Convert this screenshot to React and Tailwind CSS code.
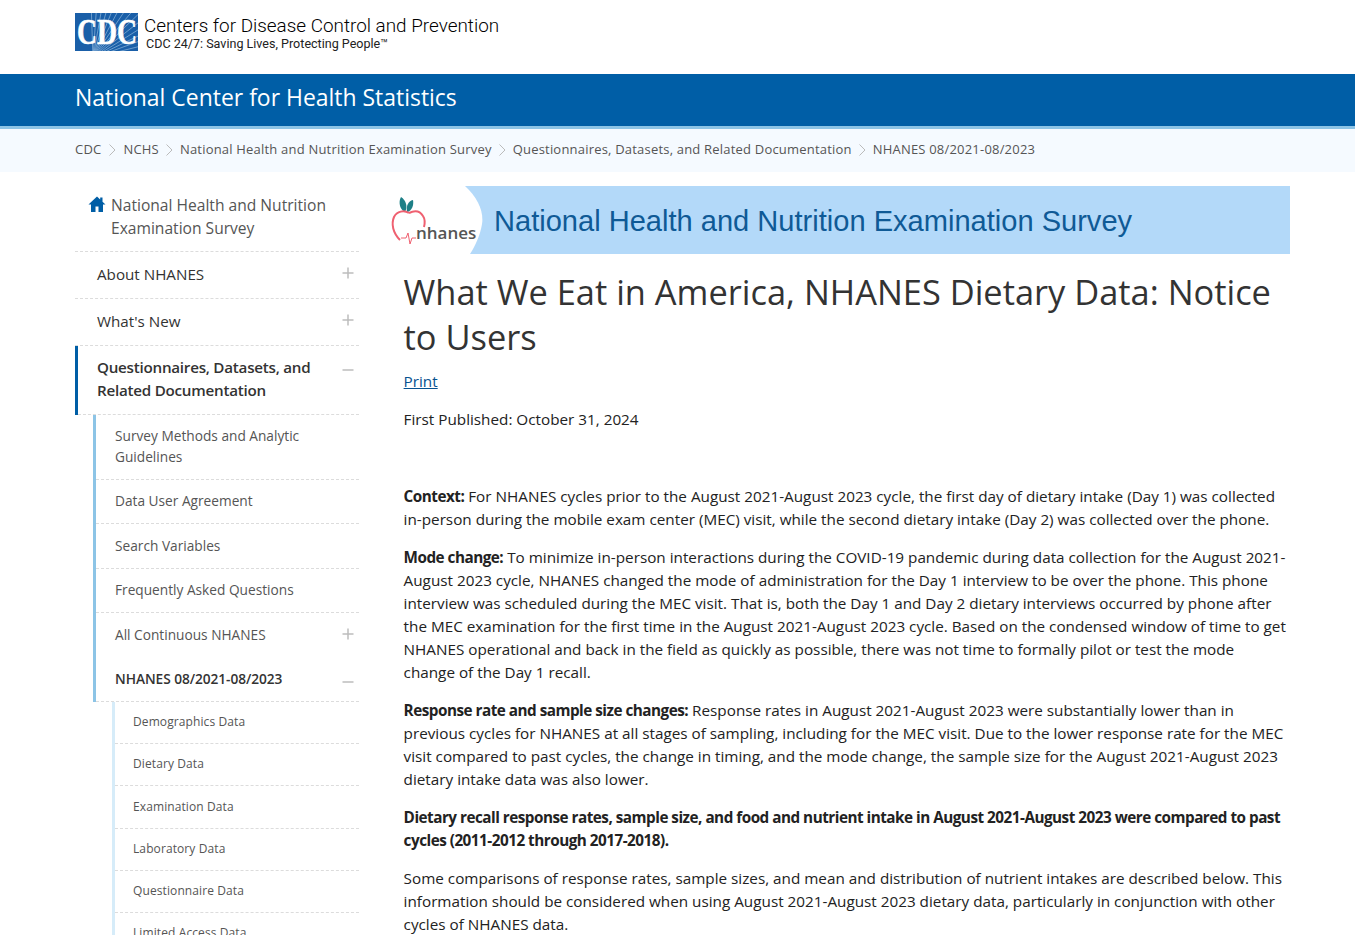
function CdcLogo() {
  const rays = [];
  for (let i = 0; i < 15; i++) {
    const a = (-8 - i * 6) * Math.PI / 180;
    rays.push(<line key={i} x1="18" y1="45" x2={18 + 90 * Math.cos(a)} y2={45 + 90 * Math.sin(a)} stroke="#8fb8dc" strokeWidth="0.7" />);
  }
  return (
    <div className="relative w-[63px] h-[38px] bg-[#1a5fa8] overflow-hidden shrink-0">
      <svg className="absolute inset-0" width="63" height="38" viewBox="0 0 63 38">{rays}</svg>
      <span className="absolute left-[1.5px] top-0 text-[36px] leading-[38px] font-bold text-white [-webkit-text-stroke:0.6px_white] [font-family:'Liberation_Serif',serif] [transform:scaleX(0.77)] origin-left">CDC</span>
    </div>
  );
}

function Nhanes() {
  return (
    <div className="relative w-[95px] h-[68px] shrink-0">
      <svg className="absolute inset-0" width="95" height="68" viewBox="0 0 95 68">
        <path d="M0 0H77C90 12 96 26 94 38C92 50 87 60 82 68H0Z" fill="#fff" />
        <path d="M17 26C12 24 10 16 13 11C18 14 20 21 17 26Z" fill="#1d7f86" />
        <path d="M19 26C18 20 20 15 25 14C26 19 24 25 19 26Z" fill="#1d7f86" />
        <path d="M21 27C16 24 9 25 6 31C3 38 5 47 12 54" fill="none" stroke="#ef6070" strokeWidth="2" />
        <path d="M21 27C27 24 32 25 35 30C37 33 37 37 36 41" fill="none" stroke="#ef6070" strokeWidth="2" />
        <path d="M13 52H18L20 47L22 58L24 52H28" fill="none" stroke="#ef6070" strokeWidth="1" />
      </svg>
      <span className="absolute left-[28px] top-[35px] text-[17px] leading-[24px] font-semibold text-[#555] [font-family:'Open_Sans',sans-serif]">nhanes</span>
    </div>
  );
}

function Plus() {
  return (
    <svg className="shrink-0" width="12" height="12" viewBox="0 0 12 12">
      <path d="M6 0.5V11.5M0.5 6H11.5" stroke="#bdbdbd" strokeWidth="1.5" fill="none" />
    </svg>
  );
}
function Minus() {
  return (
    <svg className="shrink-0" width="12" height="12" viewBox="0 0 12 12">
      <path d="M0.5 6H11.5" stroke="#bdbdbd" strokeWidth="1.5" fill="none" />
    </svg>
  );
}

const crumbs = ["CDC", "NCHS", "National Health and Nutrition Examination Survey", "Questionnaires, Datasets, and Related Documentation", "NHANES 08/2021-08/2023"];

function Crumb() {
  return (
    <div className="h-[43px] pb-[1px] bg-[#f5faff] pl-[75px] flex items-center text-[13px] tracking-[0.2px] text-[#555]">
      {crumbs.map((c, i) => (
        <div key={c} className="flex items-center first:mr-[1px]">
          {i > 0 && (
            <svg className="mx-[6px]" width="9" height="14" viewBox="0 0 9 14">
              <path d="M1.5 1.5L7 7L1.5 12.5" stroke="#bbb" strokeWidth="1" fill="none" />
            </svg>
          )}
          <span>{c}</span>
        </div>
      ))}
    </div>
  );
}

function L1({ label, icon }) {
  return (
    <div className="h-[47px] pl-[22px] pr-[5.5px] border-b border-dashed border-[#dcdcdc] flex items-center justify-between text-[15.2px] text-[#333]">
      <span className="mt-[-1px]">{label}</span>
      <span className="mt-[-5px]">{icon}</span>
    </div>
  );
}

function L2({ label, border = true, icon, bold }) {
  return (
    <div className={`h-[44.4px] pl-[19px] pr-[5.5px] flex items-center justify-between text-[13.7px] ${bold ? "font-semibold tracking-[-0.05px] text-[#333]" : "text-[#555]"} ${border ? "border-b border-dashed border-[#dcdcdc]" : ""}`}>
      <span>{label}</span>
      {icon}
    </div>
  );
}

function L3({ label }) {
  return (
    <div className="h-[42.25px] pl-[18px] pb-[1px] flex items-center border-b border-dashed border-[#dcdcdc] text-[12px] tracking-[0.1px] text-[#555]">
      {label}
    </div>
  );
}

function Sidebar() {
  return (
    <aside className="w-[284px] shrink-0 mt-[8px]">
      <div className="pl-[13px] pr-2 pb-[11px] flex text-[15.6px] leading-[23px] text-[#555] border-b border-dashed border-[#dcdcdc]">
        <svg className="mt-[2px] mr-[5px] shrink-0" width="18" height="16" viewBox="0 0 18 16">
          <path d="M9 0.5L0.5 8.5H3V16H7.5V10.5H10.5V16H15V8.5H17.5L14.5 5.7V1.5H12.2V3.5Z" fill="#005ea6" />
        </svg>
        <span>National Health and Nutrition<br />Examination Survey</span>
      </div>
      <L1 label="About NHANES" icon={<Plus />} />
      <L1 label="What's New" icon={<Plus />} />
      <div className="border-l-[3px] border-[#005ea6] h-[69px] pl-[19px] pr-[5.5px] pb-[4px] relative flex items-center justify-between text-[15.2px] leading-[23px] font-semibold tracking-[-0.25px] text-[#333]">
        <span>Questionnaires, Datasets, and<br />Related Documentation</span>
        <span className="mt-[-17px]"><Minus /></span>
        <div className="absolute bottom-0 left-0 right-0 border-b border-dashed border-[#dcdcdc]" />
      </div>
      <div className="ml-[18px] border-l-[3px] border-[#8cc4e6]">
        <div className="h-[65px] pl-[19px] pb-[2px] flex items-center text-[13.7px] leading-[21px] text-[#555] border-b border-dashed border-[#dcdcdc]">
          <span>Survey Methods and Analytic<br />Guidelines</span>
        </div>
        <L2 label="Data User Agreement" />
        <L2 label="Search Variables" />
        <L2 label="Frequently Asked Questions" />
        <L2 label="All Continuous NHANES" border={false} icon={<span className="mb-[2px]"><Plus /></span>} />
        <L2 label="NHANES 08/2021-08/2023" bold icon={<span className="mt-[6px]"><Minus /></span>} />
      </div>
      <div className="ml-[37px] border-l-[3px] border-[#d6ecf9]">
        <L3 label="Demographics Data" />
        <L3 label="Dietary Data" />
        <L3 label="Examination Data" />
        <L3 label="Laboratory Data" />
        <L3 label="Questionnaire Data" />
        <L3 label="Limited Access Data" />
      </div>
    </aside>
  );
}

export default function App() {
  return (
    <div className="h-[935px] overflow-hidden bg-white [font-family:'Open_Sans',sans-serif]">
      <header className="h-[74px] pl-[75px] pt-[13px] flex">
        <CdcLogo />
        <div className="ml-[6px] [font-family:'Roboto',sans-serif] text-black">
          <div className="text-[18.9px] leading-[26px] font-light">Centers for Disease Control and Prevention</div>
          <div className="text-[12.55px] leading-[12px] ml-[2px] mt-[-1px] text-[#222]">CDC 24/7: Saving Lives, Protecting People™</div>
        </div>
      </header>
      <div className="h-[55px] bg-[#005ea6] border-b-[3px] border-[#8cc4e6] pl-[75px] pb-[5px] flex items-center text-[22.95px] text-white">
        National Center for Health Statistics
      </div>
      <Crumb />
      <div className="flex pl-[75px] pt-[14px]">
        <Sidebar />
        <main className="ml-[29px] w-[902px]">
          <div className="h-[68px] bg-[#b3d9f9] flex items-center">
            <Nhanes />
            <span className="ml-[11px] mt-[4px] [font-family:'Liberation_Sans',sans-serif] text-[29.07px] text-[#0f5a96]">National Health and Nutrition Examination Survey</span>
          </div>
          <div className="pl-[15.6px] pr-[1.5px] text-[15.28px] leading-[23px] text-[#222]">
            <h1 className="mt-[14.5px] text-[34.4px] leading-[45px] text-[#333]">What We Eat in America, NHANES Dietary Data: Notice to Users</h1>
            <p className="mt-[11.5px]"><a className="underline text-[#075290]">Print</a></p>
            <p className="mt-[15px]">First Published: October 31, 2024</p>
            <p className="mt-[54px]"><b className="font-bold tracking-[-0.5px]">Context:</b> For NHANES cycles prior to the August 2021-August 2023 cycle, the first day of dietary intake (Day 1) was collected in-person during the mobile exam center (MEC) visit, while the second dietary intake (Day 2) was collected over the phone.</p>
            <p className="mt-[15px]"><b className="font-bold tracking-[-0.5px]">Mode change:</b> To minimize in-person interactions during the COVID-19 pandemic during data collection for the August 2021-August 2023 cycle, NHANES changed the mode of administration for the Day 1 interview to be over the phone. This phone interview was scheduled during the MEC visit. That is, both the Day 1 and Day 2 dietary interviews occurred by phone after the MEC examination for the first time in the August 2021-August 2023 cycle. Based on the condensed window of time to get NHANES operational and back in the field as quickly as possible, there was not time to formally pilot or test the mode change of the Day 1 recall.</p>
            <p className="mt-[15px]"><b className="font-bold tracking-[-0.5px]">Response rate and sample size changes:</b> Response rates in August 2021-August 2023 were substantially lower than in previous cycles for NHANES at all stages of sampling, including for the MEC visit. Due to the lower response rate for the MEC visit compared to past cycles, the change in timing, and the mode change, the sample size for the August 2021-August 2023 dietary intake data was also lower.</p>
            <p className="mt-[15px] font-bold tracking-[-0.5px]">Dietary recall response rates, sample size, and food and nutrient intake in August 2021-August 2023 were compared to past cycles (2011-2012 through 2017-2018).</p>
            <p className="mt-[15px]">Some comparisons of response rates, sample sizes, and mean and distribution of nutrient intakes are described below. This information should be considered when using August 2021-August 2023 dietary data, particularly in conjunction with other cycles of NHANES data.</p>
          </div>
        </main>
      </div>
    </div>
  );
}
